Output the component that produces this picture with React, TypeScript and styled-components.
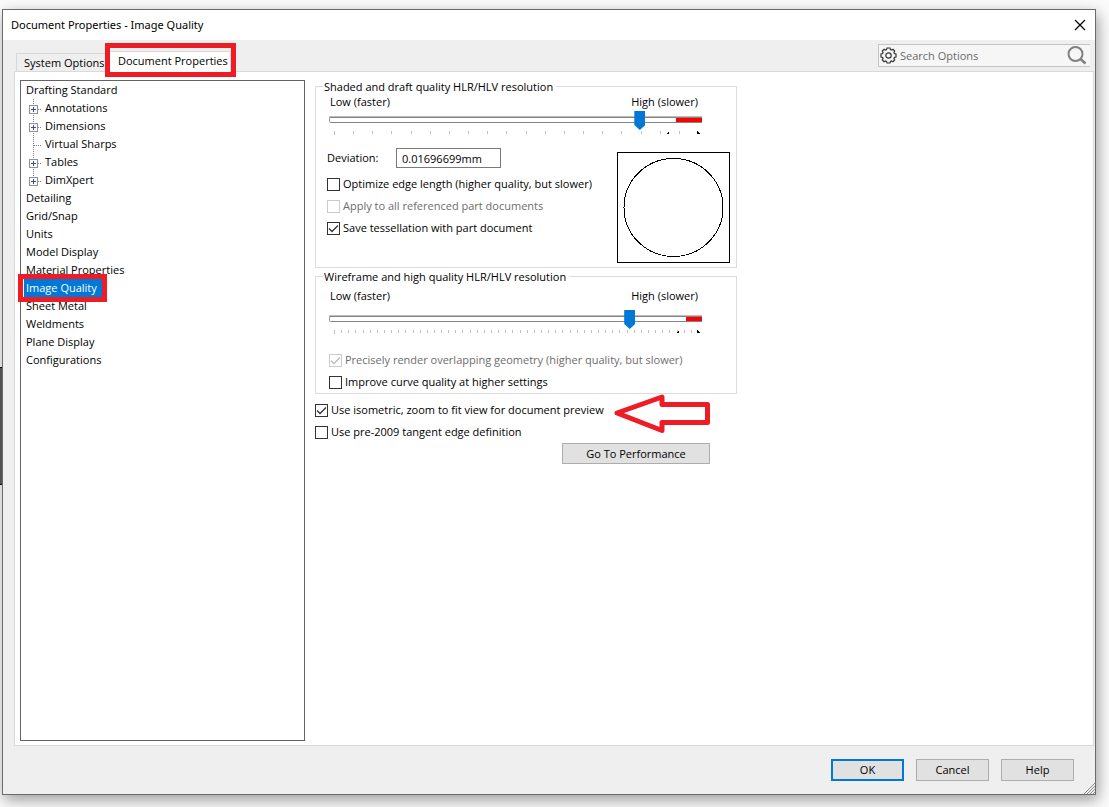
import React, { useState } from "react";
import styled, { createGlobalStyle, css } from "styled-components";

const GlobalStyle = createGlobalStyle`
  *, *::before, *::after { box-sizing: border-box; }
  body {
    margin: 0;
    background: #fbfbfb;
    color: #000;
    font: 11px/16px "Open Sans", "Segoe UI", sans-serif;
    overflow: hidden;
  }
  button, input { font: inherit; color: inherit; }
`;

const Desktop = styled.div`
  position: relative;
  display: flex;
  min-height: 100vh;
  padding: 9px 13px 12px 2px;
`;

const BackWindow = styled.div`
  position: absolute;
  left: 0;
  top: 367px;
  width: 3px;
  height: 118px;
  background: #5e5e5e;
  border: solid #111;
  border-width: 1px 0;
`;

const Dialog = styled.main`
  position: relative;
  flex: 1;
  display: flex;
  flex-direction: column;
  border: 1px solid #6b6b6b;
  background: #efefef;
  box-shadow: 2px 5px 14px rgba(0, 0, 0, 0.38);
`;

const TitleBar = styled.header`
  display: flex;
  align-items: center;
  justify-content: space-between;
  height: 30px;
  padding: 0 9px 0 8px;
  background: #fff;
`;

const Title = styled.h1`
  margin: 0;
  font-family: "Noto Sans", "Open Sans", sans-serif;
  font-size: 11px;
  font-weight: 400;
`;

const CloseButton = styled.button`
  display: flex;
  padding: 0;
  border: 0;
  background: none;
`;

const TopStrip = styled.div`
  display: flex;
  align-items: flex-end;
  justify-content: space-between;
  height: 31px;
  padding: 0 5px 0 13px;
`;

const Tabs = styled.div`
  display: flex;
  align-items: flex-end;
`;

const Tab = styled.button<{ $active?: boolean }>`
  position: relative;
  height: 18px;
  padding: 0 0 0 7px;
  width: 90px;
  border: solid #d9d9d9;
  border-width: 1px 0 0 1px;
  background: #efefef;
  text-align: left;
  white-space: nowrap;
  ${(p) =>
    p.$active &&
    css`
      z-index: 1;
      width: 125px;
      height: 21px;
      margin-bottom: -1px;
      padding: 0 0 2px 11px;
      border-width: 1px 1px 0;
      background: #fff;
    `}
`;

const Highlight = styled.span<{ $inset: string }>`
  position: absolute;
  inset: ${(p) => p.$inset};
  border: 5px solid #ee1c25;
  pointer-events: none;
`;

const Search = styled.label`
  display: flex;
  align-items: center;
  align-self: flex-start;
  width: 212px;
  height: 23px;
  margin-top: 4px;
  padding: 0 3px 0 1px;
  gap: 3px;
  border: solid #c4c4c4;
  border-width: 1px 0 1px 1px;
  background: #f6f6f6;
`;

const SearchInput = styled.input`
  flex: 1;
  min-width: 0;
  padding: 0;
  border: 0;
  background: none;
  outline: 0;
  &::placeholder { color: #6a6a6a; opacity: 1; }
`;

const Page = styled.section`
  flex: 1;
  display: flex;
  gap: 10px;
  margin: 0 1px 0 11px;
  padding: 8px 5px 4px;
  border: 1px solid #d9d9d9;
  background: #fff;
`;

const Tree = styled.ul`
  flex: none;
  width: 285px;
  margin: 0;
  padding: 0;
  border: 1px solid #646464;
  list-style: none;
`;

const TreeItem = styled.li<{ $child?: boolean }>`
  display: flex;
  align-items: center;
  height: 18px;
  padding-left: ${(p) => (p.$child ? 6 : 3)}px;
`;

const TreeLabel = styled.a<{ $selected?: boolean }>`
  position: relative;
  padding: 1px 5px 1px 2px;
  color: ${(p) => (p.$selected ? "#fff" : "#000")};
  background: ${(p) => (p.$selected ? "#0078d7" : "none")};
  text-decoration: none;
  white-space: nowrap;
`;

const Settings = styled.form`
  flex: none;
  display: flex;
  flex-direction: column;
  gap: 1px;
  width: 422px;
  margin-top: -1px;
`;

const Group = styled.fieldset<{ $pad: string }>`
  min-width: 0;
  margin: 0;
  padding: ${(p) => p.$pad};
  border: 1px solid #dcdcdc;
`;

const Legend = styled.legend`
  margin-left: 7px;
  padding: 0 3px 0 1px;
  line-height: 15px;
`;

const Ends = styled.div`
  display: flex;
  justify-content: space-between;
  padding: 0 38px 0 14px;
`;

const SliderBox = styled.div<{ $gap?: number }>`
  width: 373px;
  margin: ${(p) => p.$gap ?? 0}px 0 0 13px;
  svg { display: block; margin-top: 2px; }
`;

const Range = styled.input<{ $red: number }>`
  display: block;
  width: 100%;
  height: 19px;
  margin: 0;
  appearance: none;
  background: none;
  &::-webkit-slider-runnable-track {
    height: 7px;
    border-left: 1px solid #999;
    border-radius: 2px 0 0 2px;
    background:
      linear-gradient(#f00, #f00) right 2px / ${(p) => p.$red}px 4px no-repeat,
      linear-gradient(#bdbdbd 1px, #848484 1px 2px, #fff 2px 6px, #848484 6px);
    background-repeat: no-repeat;
    background-position: right 2px, 0 0;
  }
  &::-webkit-slider-thumb {
    appearance: none;
    width: 11px;
    height: 19px;
    margin-top: -5px;
    border: 0;
    border-radius: 0;
    background: #0078d7;
    clip-path: polygon(0 0, 100% 0, 100% 74%, 50% 100%, 0 74%);
  }
`;

const ShadedBody = styled.div`
  display: flex;
  justify-content: space-between;
  padding: 12px 6px 0 11px;
`;

const DeviationRow = styled.div`
  display: flex;
  align-items: center;
  height: 20px;
  margin-bottom: 5px;
`;

const DeviationLabel = styled.label`
  width: 69px;
`;

const DeviationInput = styled.input`
  width: 105px;
  height: 20px;
  padding: 0 5px;
  border: 1px solid #7a7a7a;
  background: #fff;
`;

const Preview = styled.svg`
  display: block;
  margin-top: 4px;
`;

const Check = styled.label<{ $disabled?: boolean }>`
  display: flex;
  align-items: center;
  gap: 3px;
  height: 22px;
  color: ${(p) => (p.$disabled ? "#6d6d6d" : "#000")};
  white-space: nowrap;
`;

const Box = styled.input`
  flex: none;
  width: 13px;
  height: 13px;
  margin: 0;
  appearance: none;
  border: 1px solid #333;
  background: #fff;
  &:disabled { border-color: #ccc; }
  &:checked {
    background: #fff url("data:image/svg+xml,%3Csvg xmlns='http://www.w3.org/2000/svg' viewBox='0 0 11 11'%3E%3Cpath d='M1 5.5 4 8.5 10 2.5' fill='none' stroke='%23333' stroke-width='1.3'/%3E%3C/svg%3E");
  }
  &:checked:disabled {
    background-image: url("data:image/svg+xml,%3Csvg xmlns='http://www.w3.org/2000/svg' viewBox='0 0 11 11'%3E%3Cpath d='M1 5.5 4 8.5 10 2.5' fill='none' stroke='%23bbb' stroke-width='1.3'/%3E%3C/svg%3E");
  }
`;

const WireChecks = styled.div`
  padding: 14px 0 0 13px;
`;

const Extras = styled.div`
  position: relative;
  padding-top: 4px;
`;

const Arrow = styled.svg`
  position: absolute;
  left: 298px;
  top: -2px;
`;

const Button = styled.button<{ $primary?: boolean }>`
  width: 73px;
  height: 22px;
  padding: 0;
  border: ${(p) => (p.$primary ? "2px solid #0078d7" : "1px solid #adadad")};
  background: #e1e1e1;
`;

const WideButton = styled(Button)`
  display: block;
  width: 148px;
  height: 21px;
  margin-left: 247px;
`;

const Footer = styled.footer`
  display: flex;
  justify-content: flex-end;
  gap: 12px;
  padding: 13px 21px;
`;

const Grip = styled.svg`
  position: absolute;
  right: 0;
  bottom: 0;
`;

type Node = { label: string; child?: boolean; leaf?: boolean; last?: boolean };

const nodes: Node[] = [
  { label: "Drafting Standard" },
  { label: "Annotations", child: true },
  { label: "Dimensions", child: true },
  { label: "Virtual Sharps", child: true, leaf: true },
  { label: "Tables", child: true },
  { label: "DimXpert", child: true, last: true },
  { label: "Detailing" },
  { label: "Grid/Snap" },
  { label: "Units" },
  { label: "Model Display" },
  { label: "Material Properties" },
  { label: "Image Quality" },
  { label: "Sheet Metal" },
  { label: "Weldments" },
  { label: "Plane Display" },
  { label: "Configurations" },
];

function Branch({ leaf, last }: { leaf?: boolean; last?: boolean }) {
  return (
    <svg width="16" height="18" viewBox="0 0 16 18" shapeRendering="crispEdges" aria-hidden="true">
      <path d={last ? "M6.5 0V10" : "M6.5 0V18"} stroke="#808080" strokeDasharray="1 1" />
      <path d="M7 10.5H15" stroke="#808080" strokeDasharray="1 1" />
      {!leaf && (
        <>
          <rect x="2.5" y="6.5" width="8" height="8" fill="#fafafa" stroke="#919191" />
          <path d="M4 10.5H9M6.5 8V13" stroke="#3b4f91" />
        </>
      )}
    </svg>
  );
}

function Slider({ label, value, red, ticks, from, gap }: {
  label: string; value: number; red: number; ticks: number; from: number; gap?: number;
}) {
  const [v, setV] = useState(value);
  return (
    <SliderBox $gap={gap}>
      <Range type="range" min={0} max={1000} value={v} $red={red} aria-label={label}
        onChange={(e) => setV(Number(e.target.value))} />
      <svg width="373" height="5" viewBox="0 0 373 5" shapeRendering="crispEdges" aria-hidden="true">
        {Array.from({ length: ticks }, (_, i) => (
          <rect key={i} x={5 + Math.round((i * 364) / ticks)} y="0" width="1" height={i ? 3 : 4} fill="#c0c0c0" />
        ))}
        <path d={`M${from + 3} 0V3H${from}Z`} />
        <path d="M368 0V3H371Z" />
      </svg>
    </SliderBox>
  );
}

function Option({ label, checked, disabled }: { label: string; checked?: boolean; disabled?: boolean }) {
  return (
    <Check $disabled={disabled}>
      <Box type="checkbox" defaultChecked={checked} disabled={disabled} />
      {label}
    </Check>
  );
}

export default function App() {
  const [selected, setSelected] = useState("Image Quality");
  return (
    <Desktop>
      <GlobalStyle />
      <BackWindow />
      <Dialog>
        <TitleBar>
          <Title>Document Properties - Image Quality</Title>
          <CloseButton aria-label="Close">
            <svg width="12" height="12" viewBox="0 0 12 12">
              <path d="M1 1 11 11M11 1 1 11" stroke="#000" strokeWidth="1.2" />
            </svg>
          </CloseButton>
        </TitleBar>
        <TopStrip>
          <Tabs role="tablist">
            <Tab role="tab">System Options</Tab>
            <Tab role="tab" aria-selected $active>
              Document Properties
              <Highlight $inset="-9px -6px -5px -2px" />
            </Tab>
          </Tabs>
          <Search>
            <svg width="17" height="17" viewBox="0 0 17 17" fill="none" stroke="#333" strokeWidth="1.2" aria-hidden="true">
              <path d="M7 1h3l.5 1.6 1 .5L13 2.300l1.700 1.700-.8 1.500.5 1L16 7v3l-1.600.500-.5 1 .8 1.500L13 14.700l-1.500-.8-1 .5L10 16H7l-.5-1.600-1-.5-1.500.8L2.300 13l.8-1.500-.5-1L1 10V7l1.600-.5.5-1L2.300 4 4 2.300l1.500.8 1-.5Z" />
              <circle cx="8.5" cy="8.5" r="2.700" />
            </svg>
            <SearchInput placeholder="Search Options" aria-label="Search Options" />
            <svg width="20" height="20" viewBox="0 0 20 20" fill="none" stroke="#808080" aria-hidden="true">
              <circle cx="8.500" cy="8" r="7" strokeWidth="2" />
              <path d="M13.500 13 18.500 17.500" strokeWidth="2.600" />
            </svg>
          </Search>
        </TopStrip>
        <Page>
          <Tree>
            {nodes.map((n) => (
              <TreeItem key={n.label} $child={n.child}>
                {n.child && <Branch leaf={n.leaf} last={n.last} />}
                <TreeLabel href="#" $selected={n.label === selected} onClick={(e) => { e.preventDefault(); setSelected(n.label); }}>
                  {n.label}
                  {n.label === "Image Quality" && <Highlight $inset="-5px -5px -5px -6px" />}
                </TreeLabel>
              </TreeItem>
            ))}
          </Tree>
          <Settings>
            <Group $pad="0 0 4px">
              <Legend>Shaded and draft quality HLR/HLV resolution</Legend>
              <Ends>
                <span>Low (faster)</span>
                <span>High (slower)</span>
              </Ends>
              <Slider label="Shaded and draft quality" value={843} red={26} ticks={19} from={337} />
              <ShadedBody>
                <div>
                  <DeviationRow>
                    <DeviationLabel htmlFor="deviation">Deviation:</DeviationLabel>
                    <DeviationInput id="deviation" defaultValue="0.01696699mm" />
                  </DeviationRow>
                  <Option label="Optimize edge length (higher quality, but slower)" />
                  <Option label="Apply to all referenced part documents" disabled />
                  <Option label="Save tessellation with part document" checked />
                </div>
                <Preview width="113" height="111" viewBox="0 0 113 111" fill="none" stroke="#000" shapeRendering="crispEdges" role="img" aria-label="Quality preview">
                  <rect x=".5" y=".5" width="112" height="110" />
                  <ellipse cx="56.500" cy="55.500" rx="49.500" ry="49" />
                </Preview>
              </ShadedBody>
            </Group>
            <Group $pad="4px 0 0">
              <Legend>Wireframe and high quality HLR/HLV resolution</Legend>
              <Ends>
                <span>Low (faster)</span>
                <span>High (slower)</span>
              </Ends>
              <Slider label="Wireframe and high quality" value={815} red={16} ticks={51} from={347} gap={5} />
              <WireChecks>
                <Option label="Precisely render overlapping geometry (higher quality, but slower)" checked disabled />
                <Option label="Improve curve quality at higher settings" />
              </WireChecks>
            </Group>
            <Extras>
              <Option label="Use isometric, zoom to fit view for document preview" checked />
              <Option label="Use pre-2009 tangent edge definition" />
              <WideButton type="button">Go To Performance</WideButton>
              <Arrow width="98" height="42" viewBox="0 0 98 42" fill="none" stroke="#ee1c25" strokeWidth="5" strokeLinejoin="round" aria-hidden="true">
                <path d="M4 20 49 4V11.500H94.500V29.500H49V37.500Z" />
              </Arrow>
            </Extras>
          </Settings>
        </Page>
        <Footer>
          <Button $primary>OK</Button>
          <Button>Cancel</Button>
          <Button>Help</Button>
        </Footer>
        <Grip width="12" height="12" viewBox="0 0 12 12" stroke="#8a8a8a" aria-hidden="true">
          <path d="M1 12 12 1M4 12 12 4M7 12 12 7M10 12 12 10" />
        </Grip>
      </Dialog>
    </Desktop>
  );
}
